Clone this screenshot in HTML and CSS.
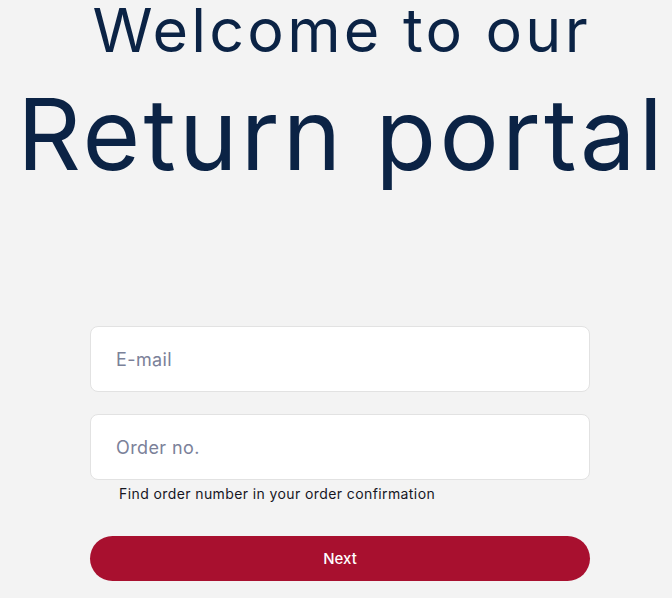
FILE: index.html
```html
<!DOCTYPE html>
<html lang="en">
<head>
<meta charset="utf-8">
<title>Return portal</title>
<link rel="stylesheet" href="styles.css">
</head>
<body>
<main class="page">
  <h1 class="title">
    <span class="title-small">Welcome to our</span>
    <span class="title-large">Return portal</span>
  </h1>
  <form class="form">
    <div class="field">
      <input class="input" type="email" placeholder="E-mail">
    </div>
    <div class="field">
      <input class="input" type="text" placeholder="Order no.">
      <p class="hint">Find order number in your order confirmation</p>
    </div>
    <button class="button" type="button">Next</button>
  </form>
</main>
</body>
</html>
```
FILE: styles.css
```css
* { box-sizing: border-box; }
html, body { margin: 0; padding: 0; }
body {
  background: #f3f3f3;
  font-family: Inter, "Noto Sans", sans-serif;
  color: #0b2345;
}
.page {
  padding-left: 8px;
  display: flex;
  flex-direction: column;
  align-items: center;
}
.title {
  margin: 0;
  display: flex;
  flex-direction: column;
  align-items: center;
  font-weight: 400;
  color: #0b2345;
  white-space: nowrap;
}
.title-small {
  font-size: 61px;
  line-height: 61px;
  letter-spacing: 3.2px;
  text-indent: 3.2px;
}
.title-large {
  font-size: 99px;
  line-height: 99px;
  letter-spacing: 3.2px;
  text-indent: 3.2px;
  margin-top: 24px;
}
.form {
  width: 500px;
  margin-top: 142px;
  display: flex;
  flex-direction: column;
}
.field { margin-bottom: 22px; }
.field + .field { margin-bottom: 34px; }
.input {
  display: block;
  width: 100%;
  height: 66px;
  border: 1px solid #e2e2e2;
  border-radius: 8px;
  background: #fff;
  padding: 0 25px;
  font-family: Inter, "Noto Sans", sans-serif;
  font-size: 18px;
  letter-spacing: 0.4px;
  color: #0b2345;
  outline: none;
}
.input::placeholder { color: #7b8199; }
.hint {
  margin: 6px 0 0 29px;
  font-size: 14px;
  line-height: 16px;
  letter-spacing: 0.4px;
  color: #16161f;
}
.button {
  height: 45px;
  border: none;
  border-radius: 23px;
  background: #a8102f;
  color: #fff;
  font-family: Inter, "Noto Sans", sans-serif;
  font-size: 15px;
  font-weight: 500;
  cursor: pointer;
}
```
